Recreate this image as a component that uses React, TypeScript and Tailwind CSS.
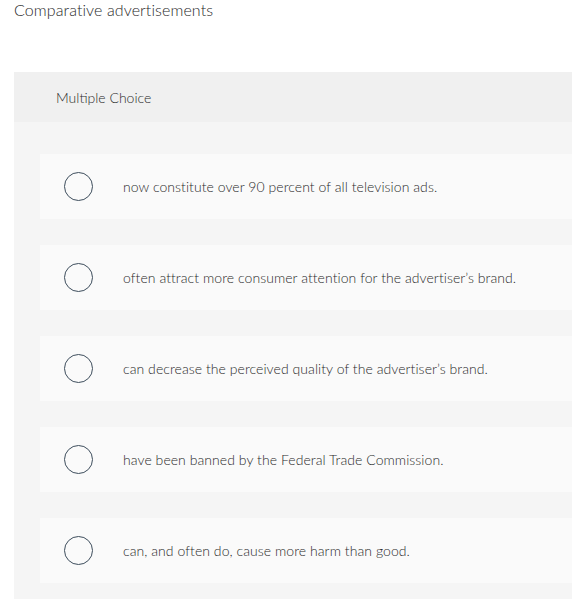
import React from "react";

const options = [
  "now constitute over 90 percent of all television ads.",
  "often attract more consumer attention for the advertiser’s brand.",
  "can decrease the perceived quality of the advertiser’s brand.",
  "have been banned by the Federal Trade Commission.",
  "can, and often do, cause more harm than good.",
];

export default function App() {
  return (
    <div className="w-[572px] h-[599px] bg-white overflow-hidden text-[#2a2a2a] font-['Lato',sans-serif] font-light">
      <div className="pl-[14px] h-[72px] text-[16px] leading-[20px] tracking-[0.1px]">
        Comparative advertisements
      </div>
      <div className="ml-[14px]">
        <div className="h-[50px] bg-[#f0f0f0] flex items-center pl-[42px] text-[14px]">
          Multiple Choice
        </div>
        <div className="bg-[#f5f5f5] pt-[32px] pl-[26px] pb-[16px] flex flex-col gap-[26px]">
          {options.map((o) => (
            <div key={o} className="h-[65px] bg-[#fafafa] flex items-center">
              <div className="ml-[24px] w-[29px] h-[29px] rounded-full border-[1.5px] border-[#3d4d5c] shrink-0" />
              <div className="ml-[30px] text-[14px] tracking-[0.06px]">{o}</div>
            </div>
          ))}
        </div>
      </div>
    </div>
  );
}
